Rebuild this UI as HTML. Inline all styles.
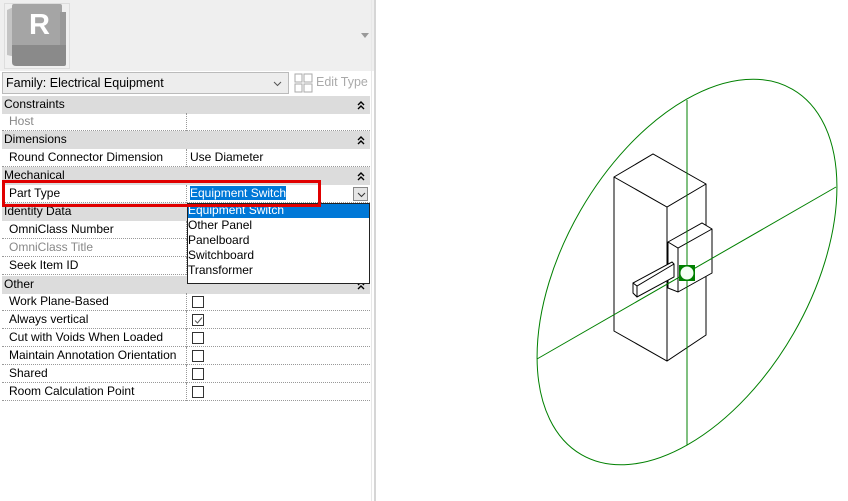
<!DOCTYPE html>
<html><head><style>
*{margin:0;padding:0;box-sizing:border-box}
body{width:848px;height:501px;background:#fff;font-family:"Liberation Sans",Arial,sans-serif;font-size:12px;color:#000;position:relative;overflow:hidden}
.abs{position:absolute}
.panel{left:0;top:0;width:374px;height:501px;background:#fff}
.hdr{left:0;top:0;width:374px;height:71px;background:#efefef}
.row{position:absolute;left:2px;width:368px;height:18px;line-height:17px}
.grp{background:#dcdcdc;padding-left:2px}
.prop{border-bottom:1px dotted #999}
.prop .n{position:absolute;left:7px}
.prop .v{position:absolute;left:184px;top:0;height:18px;border-left:1px dotted #999;padding-left:3px;width:184px}
.chev{position:absolute;right:5px;top:4px;width:8px;height:10px}
.cb{position:absolute;left:190px;top:3px;width:12px;height:12px;border:1px solid #333;background:#fff}
</style></head><body>
<div class="abs panel"></div>
<div class="abs hdr"></div>
<div class="abs" style="left:4px;top:3px;width:66px;height:66px;border:1px solid #ddd;background:#f0f0f0"></div>
<svg class="abs" style="left:0;top:0" width="75" height="70">
<polygon points="7,10 20,4 20,58 7,55" fill="#c4c4c4"/>
<rect x="12" y="4" width="50" height="42" rx="2" fill="#a5a5a5"/>
<rect x="60" y="12" width="6" height="50" fill="#999"/>
<path d="M12 45 H66 V64 Q66 66 64 66 H16 Q12 66 12 62 Z" fill="#8a8a8a"/>
</svg>
<div class="abs" style="left:29px;top:9px;color:#fff;font-weight:bold;font-size:29px">R</div>
<div class="abs" style="left:361px;top:33px;width:0;height:0;border-left:4px solid transparent;border-right:4px solid transparent;border-top:5px solid #999"></div>
<div class="abs" style="left:2px;top:72px;width:287px;height:22px;border:1px solid #bbb;background:#ededed;line-height:20px;padding-left:3px;font-size:12.5px">Family: Electrical Equipment<svg style="position:absolute;right:6px;top:8px" width="9" height="6"><polyline points="1,1 4.5,4.5 8,1" fill="none" stroke="#555"/></svg></div>
<svg class="abs" style="left:294px;top:73px" width="20" height="20"><g fill="none" stroke="#aaa"><rect x="1" y="1" width="7" height="8"/><rect x="10" y="1" width="8" height="8"/><rect x="1" y="11" width="7" height="8"/><rect x="10" y="11" width="8" height="8"/></g></svg>
<div class="abs" style="left:316px;top:75px;color:#aaa;font-size:12.5px">Edit Type</div>
<div class="abs" style="left:0;top:94px;width:372px;height:310px;background:#fff"></div>

<div class="row grp" style="top:96px">Constraints<svg class="chev"><polyline points="1,5 4,2 7,5" fill="none" stroke="#000" stroke-width="1.4"/><polyline points="1,9 4,6 7,9" fill="none" stroke="#000" stroke-width="1.4"/></svg></div>
<div class="row prop" style="top:113px"><span class="n" style="color:#888">Host</span><span class="v"></span></div>
<div class="row grp" style="top:131px">Dimensions<svg class="chev"><polyline points="1,5 4,2 7,5" fill="none" stroke="#000" stroke-width="1.4"/><polyline points="1,9 4,6 7,9" fill="none" stroke="#000" stroke-width="1.4"/></svg></div>
<div class="row prop" style="top:149px"><span class="n">Round Connector Dimension</span><span class="v">Use Diameter</span></div>
<div class="row grp" style="top:167px">Mechanical<svg class="chev"><polyline points="1,5 4,2 7,5" fill="none" stroke="#000" stroke-width="1.4"/><polyline points="1,9 4,6 7,9" fill="none" stroke="#000" stroke-width="1.4"/></svg></div>
<div class="row prop" style="top:185px"><span class="n">Part Type</span><span class="v"><span style="background:#0078d7;color:#fff">Equipment Switch</span></span></div>
<div class="abs" style="left:353px;top:187px;width:15px;height:14px;border:1px solid #888;background:#e5e5e5"><svg style="position:absolute;left:3px;top:4px" width="9" height="6"><polyline points="1,1 4.5,4.5 8,1" fill="none" stroke="#333"/></svg></div>
<div class="row grp" style="top:203px">Identity Data</div>
<div class="row prop" style="top:221px"><span class="n">OmniClass Number</span><span class="v"></span></div>
<div class="row prop" style="top:239px"><span class="n" style="color:#888">OmniClass Title</span><span class="v"></span></div>
<div class="row prop" style="top:257px"><span class="n">Seek Item ID</span><span class="v"></span></div>
<div class="row grp" style="top:276px">Other<svg class="chev"><polyline points="1,5 4,2 7,5" fill="none" stroke="#000" stroke-width="1.4"/><polyline points="1,9 4,6 7,9" fill="none" stroke="#000" stroke-width="1.4"/></svg></div>
<div class="row prop" style="top:293px"><span class="n">Work Plane-Based</span><span class="v"></span><span class="cb"></span></div>
<div class="row prop" style="top:311px"><span class="n">Always vertical</span><span class="v"></span><span class="cb"><svg style="position:absolute;left:1px;top:1px" width="9" height="9"><polyline points="1,4.5 3.5,7 8,1.5" fill="none" stroke="#555"/></svg></span></div>
<div class="row prop" style="top:329px"><span class="n">Cut with Voids When Loaded</span><span class="v"></span><span class="cb"></span></div>
<div class="row prop" style="top:347px"><span class="n">Maintain Annotation Orientation</span><span class="v"></span><span class="cb"></span></div>
<div class="row prop" style="top:365px"><span class="n">Shared</span><span class="v"></span><span class="cb"></span></div>
<div class="row prop" style="top:383px"><span class="n">Room Calculation Point</span><span class="v"></span><span class="cb"></span></div>

<div class="abs" style="left:187px;top:203px;width:183px;height:81px;border:1px solid #222;background:#fff;line-height:15px">
<div style="background:#0078d7;color:#fff;height:14px;line-height:12px">Equipment Switch</div>
<div>Other Panel</div><div>Panelboard</div><div>Switchboard</div><div>Transformer</div></div>
<div class="abs" style="left:2px;top:180px;width:319px;height:27px;border:3px solid #e00000"></div>
<div class="abs" style="left:371px;top:0;width:1px;height:501px;background:#e8e8e8"></div>
<div class="abs" style="left:374px;top:0;width:2px;height:501px;background:#d6d6d6"></div>

<svg class="abs" style="left:0;top:0" width="848" height="501">
<ellipse cx="687" cy="272" rx="123" ry="211" transform="rotate(30 687 272)" fill="none" stroke="#008000"/>
<g fill="#fff" stroke="#000" stroke-width="1">
<polygon points="614,177 653,154 706,184 706,335 667,361 614,331"/>
<polyline points="614,177 667,207 706,184" fill="none"/>
<line x1="667" y1="207" x2="667" y2="361"/>
<polygon points="668,242 702,223 712,229 712,273 678,292 668,288"/>
<polyline points="668,242 678,248 712,229" fill="none"/>
<line x1="678" y1="248" x2="678" y2="292"/>
<polygon points="633,283 672,262 674,264 674,277 637,297 633,293"/>
<polyline points="633,283 637,286 674,264" fill="none"/>
<line x1="637" y1="286" x2="637" y2="297"/>
</g>
<g stroke="#008000" stroke-width="1">
<line x1="687" y1="100" x2="687" y2="445"/>
<line x1="537" y1="359" x2="836" y2="187"/>
</g>
<rect x="679" y="265" width="16" height="16" fill="#008000"/>
<circle cx="687" cy="273" r="6.5" fill="#f4fff4"/>
</svg>
</body></html>
